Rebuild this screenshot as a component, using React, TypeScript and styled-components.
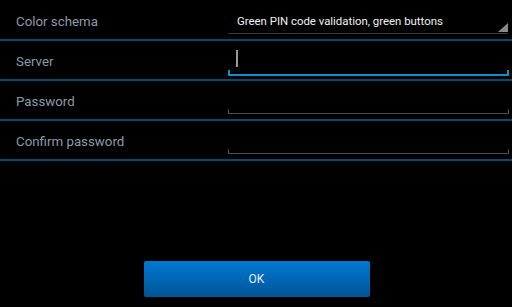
import React from 'react'
import styled, { createGlobalStyle } from 'styled-components'

const GlobalStyle = createGlobalStyle`
  html, body {
    margin: 0;
    padding: 0;
    background: #000;
  }
  body {
    font-family: Roboto, 'Liberation Sans', sans-serif;
    width: 512px;
    height: 307px;
    overflow: hidden;
  }
`

const Screen = styled.div`
  display: flex;
  flex-direction: column;
  width: 512px;
  height: 307px;
  background: #000;
`

const Form = styled.div`
  display: flex;
  flex-direction: column;
  padding-top: 1px;
`

const Row = styled.div`
  display: flex;
  align-items: stretch;
  height: 38px;
  border-bottom: 2px solid #0b4768;
`

const Label = styled.div`
  width: 228px;
  box-sizing: border-box;
  padding-left: 16px;
  padding-top: 3px;
  display: flex;
  align-items: center;
  font-size: 13.3px;
  color: #8c9ba8;
`

const Spinner = styled.div`
  flex: 1;
  margin-right: 4px;
  margin-bottom: 5px;
  position: relative;
  display: flex;
  align-items: center;
  padding-left: 9px;
  padding-top: 8px;
  border-bottom: 1px solid #3c3c3c;
  font-size: 11.4px;
  color: #f2f2f2;
`

const Corner = styled.svg`
  position: absolute;
  right: 0;
  bottom: 1px;
`

const Field = styled.div<{ $focused?: boolean }>`
  flex: 1;
  margin-right: 3px;
  margin-bottom: ${(p) => (p.$focused ? 3 : 5)}px;
  position: relative;
  display: flex;
  align-items: center;
  padding-left: 8px;
  border-bottom: ${(p) => (p.$focused ? '2px solid #1190c8' : '1px solid #4d4d4d')};

  &::before,
  &::after {
    content: '';
    position: absolute;
    bottom: 0;
    width: ${(p) => (p.$focused ? 2 : 1)}px;
    height: 4px;
    background: ${(p) => (p.$focused ? '#1190c8' : '#4d4d4d')};
  }
  &::before {
    left: 0;
  }
  &::after {
    right: 0;
  }
`

const Caret = styled.span`
  display: block;
  width: 2px;
  height: 17px;
  margin-top: 2px;
  background: #9a9a9a;
`

const Footer = styled.div`
  display: flex;
  justify-content: center;
  padding-top: 100px;
`

const OkButton = styled.button`
  width: 226px;
  height: 36px;
  border: none;
  border-radius: 2px;
  background: linear-gradient(to bottom, #0078d4 0%, #0065b2 55%, #005493 100%);
  color: #e8eef4;
  font-family: Roboto, 'Liberation Sans', sans-serif;
  font-size: 12px;
  padding: 0;
  margin-left: 1px;
`

export default function App() {
  return (
    <Screen>
      <GlobalStyle />
      <Form>
        <Row>
          <Label>Color schema</Label>
          <Spinner>
            Green PIN code validation, green buttons
            <Corner width="10" height="9" viewBox="0 0 10 9">
              <polygon points="10,0 10,9 0,9" fill="#8a8a8a" />
            </Corner>
          </Spinner>
        </Row>
        <Row>
          <Label>Server</Label>
          <Field $focused>
            <Caret />
          </Field>
        </Row>
        <Row>
          <Label>Password</Label>
          <Field />
        </Row>
        <Row>
          <Label>Confirm password</Label>
          <Field />
        </Row>
      </Form>
      <Footer>
        <OkButton>OK</OkButton>
      </Footer>
    </Screen>
  )
}
